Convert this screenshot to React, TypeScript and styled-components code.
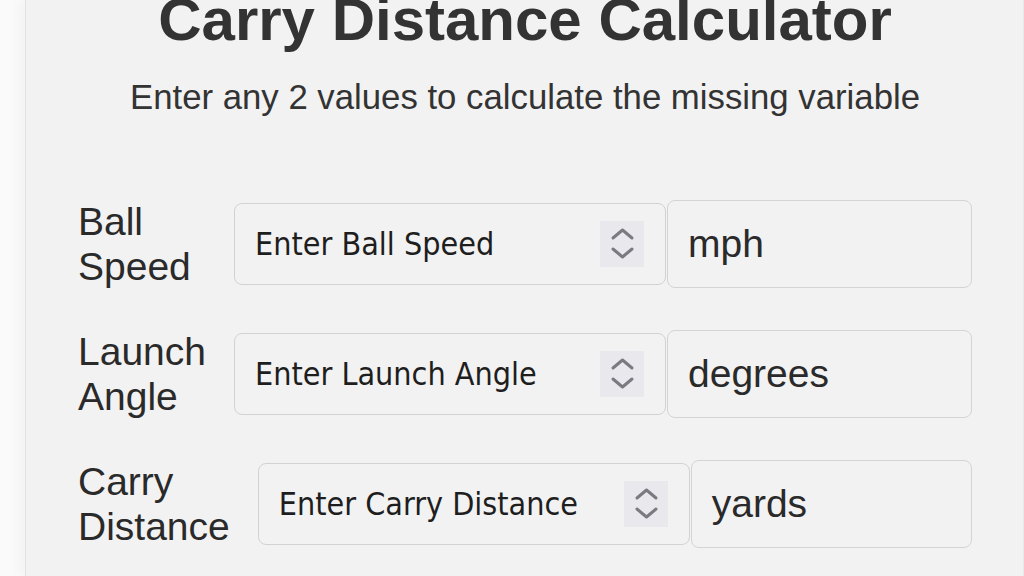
import React from 'react';
import styled, {createGlobalStyle} from 'styled-components';

const GlobalStyle = createGlobalStyle`
  html, body {
    margin: 0;
    padding: 0;
    background: #fafafa;
    overflow: hidden;
  }
`

type Field = {
    label: string
    placeholder: string
    unit: string
}

const fields: Field[] = [
    {label: 'Ball Speed', placeholder: 'Enter Ball Speed', unit: 'mph'},
    {label: 'Launch Angle', placeholder: 'Enter Launch Angle', unit: 'degrees'},
    {label: 'Carry Distance', placeholder: 'Enter Carry Distance', unit: 'yards'},
]

const SpinIcon = () => (
    <svg width="44" height="46" viewBox="0 0 44 46">
        <path d="M13 17 L22.5 9 L32 17" fill="none" stroke="#7a7a80" strokeWidth="3" strokeLinecap="round" strokeLinejoin="round"/>
        <path d="M13 28 L22.5 36 L32 28" fill="none" stroke="#7a7a80" strokeWidth="3" strokeLinecap="round" strokeLinejoin="round"/>
    </svg>
)

export default function App() {
    return (
        <>
            <GlobalStyle/>
            <Page>
                <Title>Carry Distance Calculator</Title>
                <Subtitle>Enter any 2 values to calculate the missing variable</Subtitle>
                <Form>
                    {fields.map(f => (
                        <Row key={f.label}>
                            <Label>{f.label}</Label>
                            <InputBox>
                                <Input type="text" placeholder={f.placeholder}/>
                                <Spinner><SpinIcon/></Spinner>
                            </InputBox>
                            <UnitBox>{f.unit}</UnitBox>
                        </Row>
                    ))}
                </Form>
            </Page>
        </>
    );
}

const Page = styled.main`
  display: flow-root;
  margin-left: 25px;
  min-height: 100vh;
  background: #f2f2f2;
  border-left: 1px solid #e2e2e2;
  border-right: 1px solid #e8e8e8;
  box-shadow: -6px 0 10px rgba(0, 0, 0, 0.03);
  padding: 0 51px 0 52px;
  color: #333;
  font-family: 'Liberation Sans', Arial, sans-serif;
`

const Title = styled.h1`
  margin: -15px 0 0;
  font-size: 60px;
  line-height: 1.15;
  font-weight: 700;
  text-align: center;
  color: #333;
`

const Subtitle = styled.p`
  margin: 24px 0 0;
  font-size: 34.75px;
  line-height: 1.15;
  text-align: center;
  color: #333;
`

const Form = styled.div`
  display: flex;
  flex-direction: column;
  gap: 40px;
  margin-top: 81px;
`

const Row = styled.div`
  display: flex;
  align-items: center;
`

const Label = styled.label`
  flex: 0 0 auto;
  width: min-content;
  min-width: 128px;
  margin-right: 28px;
  font-size: 39px;
  line-height: 45px;
  color: #2a2a2a;
`

const InputBox = styled.div`
  flex: 0 0 432px;
  min-width: 0;
  box-sizing: border-box;
  height: 82px;
  display: flex;
  align-items: center;
  padding: 0 21px 0 20px;
  border: 1px solid #d2d2d2;
  border-radius: 8px;
  background: #f2f2f2;
`

const Input = styled.input`
  flex: 1;
  width: 0;
  min-width: 0;
  border: none;
  outline: none;
  background: transparent;
  padding: 0;
  font-family: 'DejaVu Sans Condensed', 'DejaVu Sans', sans-serif;
  font-size: 32px;
  color: #1e1e1e;

  &::placeholder {
    color: #1e1e1e;
    opacity: 1;
  }
`

const Spinner = styled.span`
  flex: 0 0 44px;
  height: 46px;
  display: flex;
  background: #e9e9ed;
`

const UnitBox = styled.div`
  flex: 1;
  box-sizing: border-box;
  height: 88px;
  margin-left: 1px;
  display: flex;
  align-items: center;
  padding: 0 20px;
  border: 1px solid #d4d4d4;
  border-radius: 8px;
  font-size: 39px;
  color: #2a2a2a;
`
